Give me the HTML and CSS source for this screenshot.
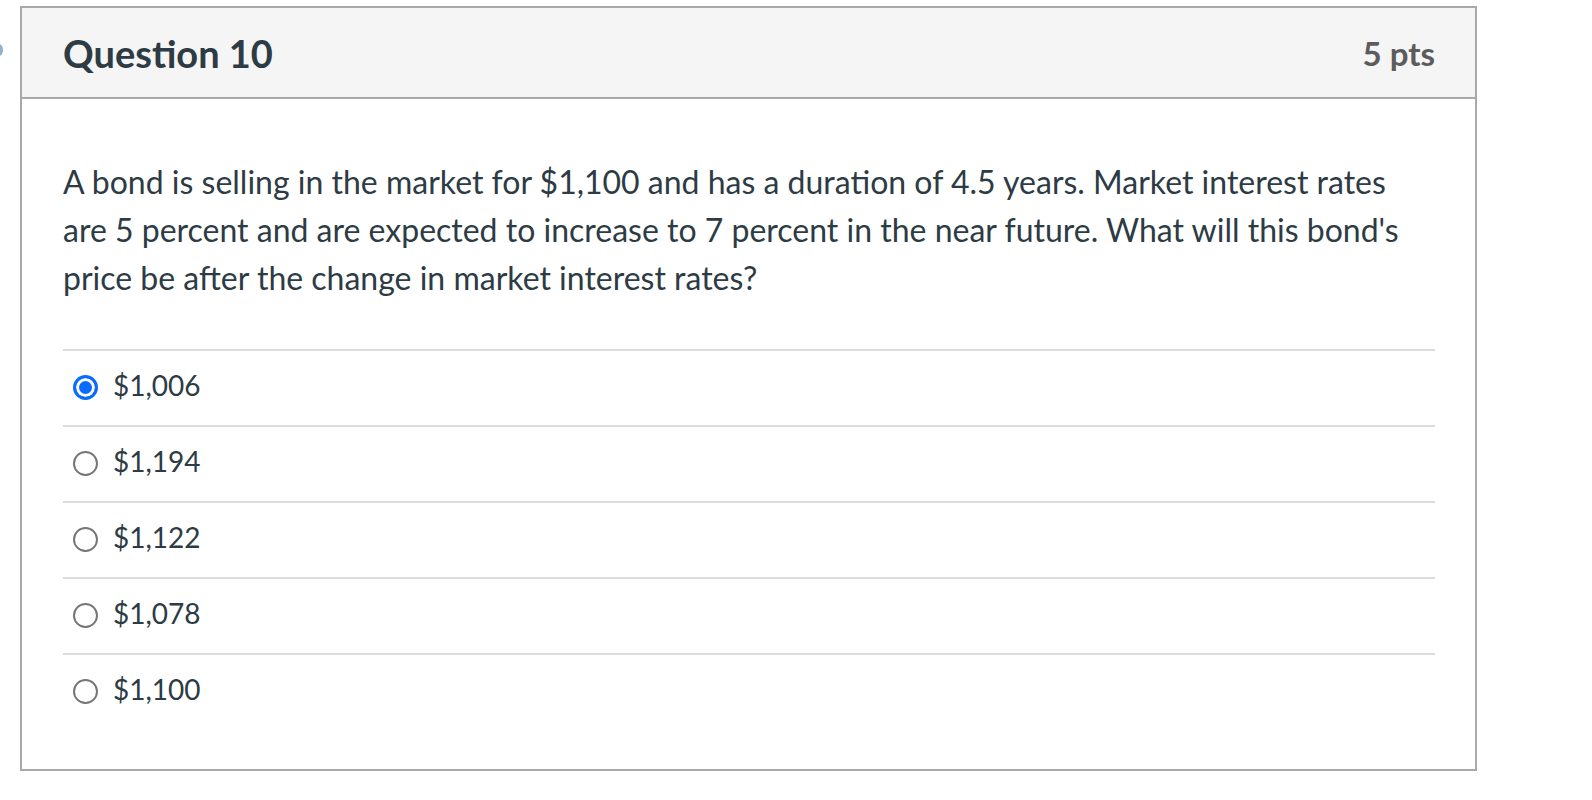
FILE: index.html
```html
<!DOCTYPE html>
<html>
<head>
  <title>Question 10</title>
  <link rel="stylesheet" href="styles.css">
</head>
<body>

  <div class="page">
    <span class="flag"></span>
    <div class="question">
      <div class="header">
        <h2 class="title">Question 10</h2>
        <span class="points">5 pts</span>
      </div>
      <div class="content">
        <p class="text">A bond is selling in the market for $1,100 and has a duration of 4.5 years. Market interest rates are 5 percent and are expected to increase to 7 percent in the near future. What will this bond's price be after the change in market interest rates?</p>
        <div class="answers">
          <label class="answer"><input type="radio" name="q10" checked> $1,006</label>
          <label class="answer"><input type="radio" name="q10"> $1,194</label>
          <label class="answer"><input type="radio" name="q10"> $1,122</label>
          <label class="answer"><input type="radio" name="q10"> $1,078</label>
          <label class="answer"><input type="radio" name="q10"> $1,100</label>
        </div>
      </div>
    </div>
  </div>

</body>
</html>
```

FILE: styles.css
```css
body {
  margin: 0;
  font-family: Lato, "Open Sans", sans-serif;
  background-color: #ffffff;
  color: #2d3b45;
}

.page {
  position: relative;
  padding: 6px 0 0 20px;
}

.flag {
  position: absolute;
  left: -5px;
  top: 44px;
  width: 8px;
  height: 12px;
  border-radius: 50%;
  background-color: #8fb3cf;
}

.question {
  width: 1453px;
  border: 2px solid #a9a9a9;
}

.header {
  height: 89px;
  padding: 0 40px 0 41px;
  background-color: #f5f5f5;
  border-bottom: 2px solid #a9a9a9;
  display: flex;
  justify-content: space-between;
  align-items: center;
}

.title {
  margin: 0;
  font-size: 38px;
  font-weight: bold;
  color: #2d3b45;
}

.points {
  font-size: 33px;
  font-weight: bold;
  color: #5c5c5c;
}

.content {
  padding: 59px 40px 40px 41px;
}

.text {
  margin: 0 0 47px 0;
  font-size: 32px;
  line-height: 48px;
}

.answer {
  height: 68px;
  padding-bottom: 6px;
  border-top: 2px solid #dcdcdc;
  display: flex;
  align-items: center;
  gap: 15px;
  padding-left: 10px;
  font-size: 28px;
  cursor: pointer;
}

.answer input {
  appearance: none;
  margin: 4px 0 0 0;
  width: 25px;
  height: 25px;
  border: 2px solid #767676;
  border-radius: 50%;
  background-color: #ffffff;
}

.answer input:checked {
  border: 3px solid #0a6cff;
  background-color: #0a6cff;
  box-shadow: inset 0 0 0 3px #ffffff;
}
```
